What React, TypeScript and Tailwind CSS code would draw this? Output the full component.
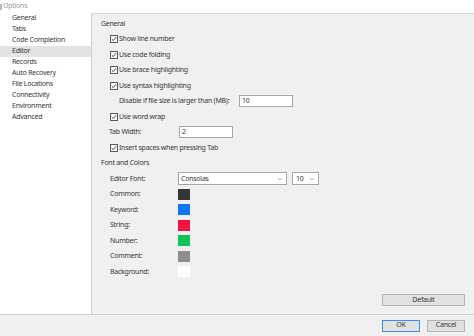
import React from 'react';

const MENU = [
  'General',
  'Tabs',
  'Code Completion',
  'Editor',
  'Records',
  'Auto Recovery',
  'File Locations',
  'Connectivity',
  'Environment',
  'Advanced',
];

const COLORS = [
  { label: 'Common:', color: 'bg-[#353535]' },
  { label: 'Keyword:', color: 'bg-[#0f77f5]' },
  { label: 'String:', color: 'bg-[#f0163f]' },
  { label: 'Number:', color: 'bg-[#10c45a]' },
  { label: 'Comment:', color: 'bg-[#8e8e8e]' },
  { label: 'Background:', color: 'bg-white' },
];

function Check({ label }: { label: string }) {
  return (
    <div className="flex h-[15.5px] items-center pl-[18px]">
      <svg width="8" height="8" viewBox="0 0 8 8" className="mr-[1px] shrink-0">
        <rect x="0.5" y="0.5" width="7" height="7" fill="#fff" stroke="#5a5a5a" />
        <path d="M1.8 4.2 L3.3 5.6 L6.2 2.2" fill="none" stroke="#333" strokeWidth="0.9" />
      </svg>
      <span className="whitespace-nowrap">{label}</span>
    </div>
  );
}

function Chevron() {
  return (
    <svg width="6" height="4" viewBox="0 0 6 4" className="ml-auto mr-[3px]">
      <path d="M0.8 0.8 L3 3 L5.2 0.8" fill="none" stroke="#9a9a9a" strokeWidth="0.8" />
    </svg>
  );
}

function App() {
  return (
    <div
      className="flex h-[336px] w-[474px] flex-col overflow-hidden bg-white text-[7px] tracking-[-0.25px] text-[#383838]"
      style={{ fontFamily: '"Noto Sans", "Open Sans", sans-serif' }}
    >
      <div className="flex h-[13px] items-center bg-white text-[#9a9a9a]">
        <div className="h-[6px] w-[2px] bg-[#b8b8b8]" />
        <span className="pl-[1px]">Options</span>
      </div>
      <div className="flex h-[301px]">
        <div className="w-[92px] border-r border-[#cfcfcf] bg-white">
          {MENU.map((item) => (
            <div
              key={item}
              className={
                item === 'Editor'
                  ? 'flex h-[11px] items-center bg-[#e3e3e3] pl-[12px]'
                  : 'flex h-[11px] items-center pl-[12px]'
              }
            >
              {item}
            </div>
          ))}
        </div>
        <div className="flex flex-1 flex-col border-t border-[#dadada] bg-[#f0f0f0] pt-[2px] pb-[8px]">
          <div className="flex h-[15.5px] items-center pl-[9px]">General</div>
          <Check label="Show line number" />
          <Check label="Use code folding" />
          <Check label="Use brace highlighting" />
          <Check label="Use syntax highlighting" />
          <div className="flex h-[15.5px] items-center pl-[27px]">
            <span className="w-[120px] whitespace-nowrap">Disable if file size is larger than (MB):</span>
            <div className="flex h-[12px] w-[54px] items-center border border-[#a6a6a6] bg-white pl-[2px]">
              10
            </div>
          </div>
          <Check label="Use word wrap" />
          <div className="flex h-[15.5px] items-center pl-[17px]">
            <span className="w-[70px]">Tab Width:</span>
            <div className="flex h-[12px] w-[54px] items-center border border-[#a6a6a6] bg-white pl-[2px]">
              2
            </div>
          </div>
          <Check label="Insert spaces when pressing Tab" />
          <div className="flex h-[15.5px] items-center pl-[9px]">Font and Colors</div>
          <div className="flex h-[15.5px] items-center pl-[18px]">
            <span className="w-[68px]">Editor Font:</span>
            <div className="flex h-[13px] w-[109px] items-center border border-[#a6a6a6] bg-white pl-[2px]">
              Consolas
              <Chevron />
            </div>
            <div className="ml-[5px] flex h-[13px] w-[27px] items-center border border-[#a6a6a6] bg-white pl-[3px]">
              10
              <Chevron />
            </div>
          </div>
          {COLORS.map(({ label, color }) => (
            <div key={label} className="flex h-[15.5px] items-center pl-[18px]">
              <span className="w-[68px]">{label}</span>
              <div className={`h-[11px] w-[12px] ${color}`} />
            </div>
          ))}
          <div className="flex-1" />
          <div className="flex justify-end pr-[9px]">
            <div className="flex h-[12px] w-[83px] items-center justify-center border border-[#b5b5b5] bg-[#e1e1e1]">
              Default
            </div>
          </div>
        </div>
      </div>
      <div className="flex flex-1 items-center justify-end gap-[7px] border-t border-[#cfcfcf] bg-[#f0f0f0] pr-[9px]">
        <div className="flex h-[12px] w-[38px] items-center justify-center border border-[#3a8ee6] bg-[#e1e1e1]">
          OK
        </div>
        <div className="flex h-[12px] w-[38px] items-center justify-center border border-[#b5b5b5] bg-[#e1e1e1]">
          Cancel
        </div>
      </div>
    </div>
  );
}

export default App;
